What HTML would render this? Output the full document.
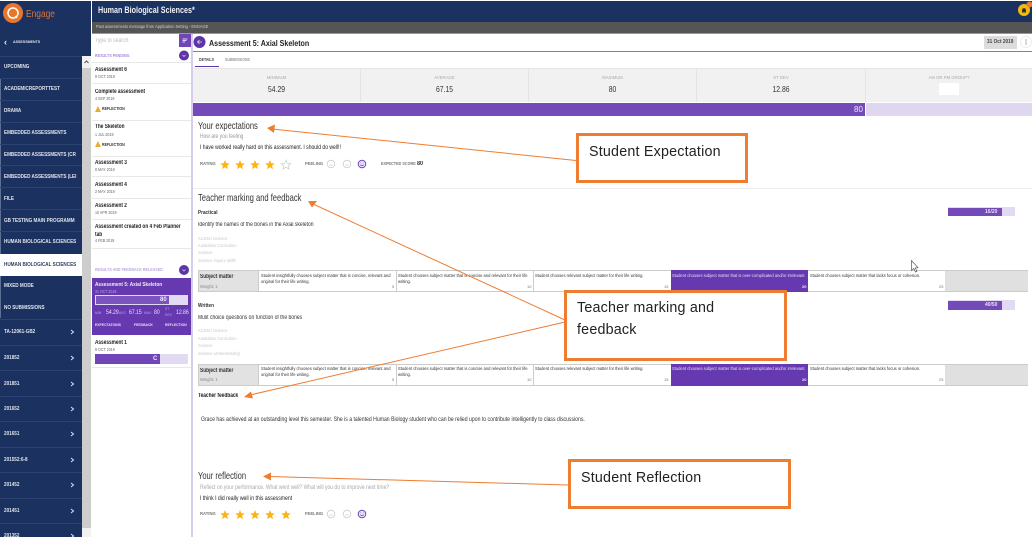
<!DOCTYPE html>
<html><head><meta charset="utf-8"><style>
html,body{margin:0;padding:0;background:#fff}
body{width:1032px;height:546px;position:relative;overflow:hidden;font-family:"Liberation Sans",sans-serif}
#app{position:absolute;left:0;top:0;width:1032px;height:537px;overflow:hidden;filter:blur(.3px);background:#fff}
#app div,#app span.a{position:absolute}
.t{white-space:nowrap;line-height:10px;height:10px}
.x9,.x85,.x8,.x78,.hd{transform-origin:0 50%}
.x9{transform:scaleX(.9)}.x85{transform:scaleX(.85)}.x8{transform:scaleX(.8)}.x78{transform:scaleX(.78)}
.hd{font-size:10.500px;color:#333;transform:scaleX(.72)}
.nav{left:4px;font-weight:bold;font-size:5.200px;color:#dfe3ec;width:82px;overflow:hidden;transform:scaleX(.89);transform-origin:0 50%}
.sl{left:0;width:82px;height:1px;background:#2b4273}
.h{left:95px;font-weight:bold;font-size:6px;color:#222;transform:scaleX(.79);transform-origin:0 50%}
.d{left:95px;font-size:4.200px;color:#666;transform:scaleX(.87);transform-origin:0 50%}
.ln{left:92px;width:99px;height:1px;background:#e8e8e8}
.w{left:102px;font-weight:bold;font-size:4.200px;color:#333;transform:scaleX(.85);transform-origin:0 50%}
.lab{font-size:4.300px;color:#aaa;text-align:center}
.val{font-size:8.500px;color:#333;text-align:center;transform:scaleX(.8)}
.g{left:198px;font-size:4.400px;color:#c8c8c8;transform:scaleX(.92);transform-origin:0 50%}
.sm{font-size:4.100px;color:#333;line-height:6px;white-space:normal}
.sc{font-size:4px;color:#777}
.rb{left:198px;width:830px;height:20px;background:#fff;border-top:1px solid #ccc;border-bottom:1px solid #ccc}
.st{font-size:6.200px;color:#e8e0f5;transform:scaleX(.82);transform-origin:0 50%}
.box{position:absolute;border:3px solid #ed7d31;background:#fff;box-sizing:border-box}
.bt{position:absolute;font-size:14.300px;color:#222;white-space:nowrap;line-height:22px;letter-spacing:.2px;font-family:"Liberation Sans",sans-serif}
</style></head><body>
<div id="app">
<!-- sidebar -->
<div style="left:0;top:1px;width:91px;height:55px;background:#1b3160"></div>
<div style="left:0;top:56px;width:82px;height:481px;background:#1b3160"></div>
<div style="left:82px;top:56px;width:9px;height:481px;background:#cdcdcd"></div>
<div style="left:82px;top:56px;width:9px;height:12px;background:#f1f1f1"></div>
<div style="left:82px;top:528px;width:9px;height:9px;background:#f1f1f1"></div>
<svg style="position:absolute;left:82px;top:56px" width="9" height="12"><path d="M2.500 7L4.500 5L6.500 7" stroke="#555" fill="none"/></svg>
<div style="left:0;top:78px;width:1px;height:240px;background:#5d6f94"></div>
<svg style="position:absolute;left:2px;top:1px" width="24" height="24"><circle cx="11" cy="12" r="10" fill="#e8772e"/><circle cx="11" cy="12" r="5" fill="none" stroke="#fff" stroke-width="1.500"/><path d="M13 15L15 17" stroke="#fff"/></svg>
<div class="t x8" style="left:26px;top:9px;font-size:10.500px;color:#d9743a">Engage</div>
<div class="t" style="left:4px;top:37px;font-size:9px;color:#eef;font-weight:bold">‹</div>
<div class="t x9" style="left:13px;top:37px;font-size:4px;font-weight:bold;color:#dfe3ec">ASSESSMENTS</div>
<div class="sl" style="top:56px"></div><div class="sl" style="top:78px"></div><div class="sl" style="top:100px"></div><div class="sl" style="top:122px"></div><div class="sl" style="top:144px"></div><div class="sl" style="top:165px"></div><div class="sl" style="top:187px"></div><div class="sl" style="top:209px"></div><div class="sl" style="top:231px"></div><div class="sl" style="top:319px"></div><div class="sl" style="top:345px"></div><div class="sl" style="top:370px"></div><div class="sl" style="top:396px"></div><div class="sl" style="top:421px"></div><div class="sl" style="top:447px"></div><div class="sl" style="top:472px"></div><div class="sl" style="top:498px"></div><div class="sl" style="top:523px"></div>
<div style="left:0;top:254px;width:82px;height:22px;background:#fff"></div>
<div class="t nav" style="top:62px">UPCOMING</div>
<div class="t nav" style="top:84px">ACADEMICREPORTTEST</div>
<div class="t nav" style="top:106px">DRAMA</div>
<div class="t nav" style="top:128px">EMBEDDED ASSESSMENTS</div>
<div class="t nav" style="top:150px">EMBEDDED ASSESSMENTS (CR</div>
<div class="t nav" style="top:172px">EMBEDDED ASSESSMENTS (LEI</div>
<div class="t nav" style="top:194px">FILE</div>
<div class="t nav" style="top:216px">GB TESTING MAIN PROGRAMM</div>
<div class="t nav" style="top:237px">HUMAN BIOLOGICAL SCIENCES</div>
<div class="t nav" style="top:260px;color:#33405f">HUMAN BIOLOGICAL SCIENCES</div>
<div class="t nav" style="top:281px">MIXED MODE</div>
<div class="t nav" style="top:303px">NO SUBMISSIONS</div>
<div class="t nav" style="top:327px">TA-12061-GB2</div>
<div class="t nav" style="top:353px">201852</div>
<div class="t nav" style="top:379px">201851</div>
<div class="t nav" style="top:404px">201652</div>
<div class="t nav" style="top:429px">201651</div>
<div class="t nav" style="top:455px">201552:6-8</div>
<div class="t nav" style="top:480px">201452</div>
<div class="t nav" style="top:506px">201451</div>
<div class="t nav" style="top:531px">201352</div>
<svg style="position:absolute;left:68px;top:320px" width="10" height="217" fill="none" stroke="#dfe3ec" stroke-width="1"><path d="M3 10L5.500 12L3 14M3 36L5.500 38L3 40M3 62L5.500 64L3 66M3 87L5.500 89L3 91M3 112L5.500 114L3 116M3 138L5.500 140L3 142M3 163L5.500 165L3 167M3 189L5.500 191L3 193M3 214L5.500 216L3 218"/></svg>
<!-- header -->
<div style="left:92px;top:1px;width:940px;height:21px;background:#1b3160"></div>
<div style="left:92px;top:22px;width:940px;height:11px;background:#555"></div>
<div style="left:92px;top:33px;width:940px;height:1px;background:#999"></div>
<div class="t" style="left:98px;top:5px;font-size:9px;font-weight:bold;color:#f0f2f6;transform:scaleX(.8);transform-origin:0 50%">Human Biological Sciences*</div>
<div class="t" style="left:96px;top:22px;font-size:4.300px;color:#ccc;transform:scaleX(.92);transform-origin:0 50%">Past assessments message from Application Setting - ENGAGE</div>
<svg style="position:absolute;left:1016px;top:1px" width="16" height="18"><circle cx="8" cy="9" r="6" fill="#f2b90f"/><path d="M6 11.500V8.500Q8 5.500 10 8.500V11.500Z" fill="#333"/><circle cx="13.500" cy="3.500" r="3" fill="#ed7d31"/></svg>
<!-- list panel -->
<div style="left:191px;top:34px;width:2px;height:503px;background:#d8ccee"></div>
<div class="t x85" style="left:95px;top:36px;font-size:6px;color:#bbb">Type to search</div>
<div style="left:179px;top:34px;width:12px;height:13px;background:#6f45b8"></div>
<svg style="position:absolute;left:179px;top:34px" width="12" height="13"><path d="M3.500 5H8.500M3.500 6.500H7.500M3.500 8H6" stroke="#fff" stroke-width=".7"/></svg>
<div class="t x85" style="left:95px;top:50.500px;font-size:4.300px;font-weight:bold;color:#a88ad8">RESULTS PENDING</div>
<svg style="position:absolute;left:179px;top:50px" width="10" height="11"><circle cx="5" cy="5.500" r="5" fill="#5e35a8"/><path d="M3.500 5L5 6.500L6.500 5" stroke="#ddd" fill="none" stroke-width=".7"/></svg>
<div class="ln" style="top:62px"></div><div class="ln" style="top:83px"></div><div class="ln" style="top:120px"></div><div class="ln" style="top:156px"></div><div class="ln" style="top:176px"></div><div class="ln" style="top:198px"></div><div class="ln" style="top:219px"></div><div class="ln" style="top:248px"></div><div class="ln" style="top:367px"></div>
<div class="t h" style="top:65px">Assessment 6</div><div class="t d" style="top:72px">9 OCT 2019</div>
<div class="t h" style="top:87px">Complete assessment</div><div class="t d" style="top:94px">4 SEP 2019</div>
<svg style="position:absolute;left:95px;top:106px" width="6" height="6"><path d="M3 0L6 6H0Z" fill="#e8ad2e"/></svg><div class="t w" style="top:104px">REFLECTION</div>
<div class="t h" style="top:122px">The Skeleton</div><div class="t d" style="top:129.500px">1 JUL 2019</div>
<svg style="position:absolute;left:95px;top:141px" width="6" height="6"><path d="M3 0L6 6H0Z" fill="#e8ad2e"/></svg><div class="t w" style="top:140px">REFLECTION</div>
<div class="t h" style="top:158px">Assessment 3</div><div class="t d" style="top:165px">8 MAY 2019</div>
<div class="t h" style="top:179.500px">Assessment 4</div><div class="t d" style="top:186.500px">2 MAY 2019</div>
<div class="t h" style="top:200.500px">Assessment 2</div><div class="t d" style="top:208px">10 APR 2019</div>
<div class="t h" style="top:222px">Assessment created on 4 Feb Planner</div><div class="t h" style="top:229.500px">tab</div><div class="t d" style="top:236px">4 FEB 2019</div>
<div class="t x85" style="left:95px;top:265px;font-size:4.300px;color:#b9a8d8;font-weight:bold">RESULTS AND FEEDBACK RELEASED</div>
<svg style="position:absolute;left:179px;top:264px" width="10" height="12"><circle cx="5" cy="6" r="5" fill="#5e35a8"/><path d="M3.500 5.500L5 7L6.500 5.500" stroke="#ddd" fill="none" stroke-width=".7"/></svg>
<!-- card -->
<div style="left:92px;top:278px;width:99px;height:57px;background:#6639b0"></div>
<div class="t" style="left:95px;top:280px;font-size:5.800px;font-weight:bold;color:#eee;transform:scaleX(.82);transform-origin:0 50%">Assessment 5: Axial Skeleton</div>
<div class="t x85" style="left:95px;top:287px;font-size:4.200px;color:#b9a3dd">31 OCT 2019</div>
<div style="left:95px;top:295px;width:93px;height:10px;background:#e2daf2"></div>
<div style="left:96px;top:296px;width:73px;height:8px;background:#7b55bd"></div>
<div class="t" style="left:160px;top:295px;font-size:6px;font-weight:bold;color:#eee">80</div>
<div class="t x85" style="left:95px;top:308px;font-size:4px;color:#b9a3dd">MIN</div>
<div class="t st" style="left:106px;top:308px">54.29</div>
<div class="t x85" style="left:119px;top:308px;font-size:4px;color:#b9a3dd">AVG</div>
<div class="t st" style="left:129px;top:308px">67.15</div>
<div class="t x85" style="left:144px;top:308px;font-size:4px;color:#b9a3dd">MAX</div>
<div class="t st" style="left:154px;top:308px">80</div>
<div class="t x85" style="left:165px;top:304px;font-size:4px;color:#b9a3dd">ST</div>
<div class="t x85" style="left:165px;top:310px;font-size:4px;color:#b9a3dd">DEV</div>
<div class="t st" style="left:176px;top:308px">12.86</div>
<div class="t x85" style="left:95px;top:320px;font-size:4px;font-weight:bold;color:#e8e0f5">EXPECTATIONS</div>
<div class="t x85" style="left:134px;top:320px;font-size:4px;font-weight:bold;color:#e8e0f5">FEEDBACK</div>
<div class="t x85" style="left:165px;top:320px;font-size:4px;font-weight:bold;color:#e8e0f5">REFLECTION</div>
<div class="t h" style="top:338px">Assessment 1</div><div class="t d" style="top:345px">9 OCT 2019</div>
<div style="left:95px;top:354px;width:93px;height:10px;background:#e2daf2"></div>
<div style="left:95px;top:354px;width:65px;height:10px;background:#6f45b8"></div>
<div class="t" style="left:153px;top:354px;font-size:6px;font-weight:bold;color:#eee">C</div>
<!-- main -->
<svg style="position:absolute;left:193px;top:35px" width="14" height="14"><circle cx="6.500" cy="7" r="6" fill="#5e35a8"/><path d="M9 7H4.500M6.500 5L4.500 7L6.500 9" stroke="#ddd" fill="none" stroke-width=".8"/></svg>
<div class="t" style="left:209px;top:37.500px;font-size:8.600px;font-weight:bold;color:#222;transform:scaleX(.825);transform-origin:0 50%">Assessment 5: Axial Skeleton</div>
<div style="left:984px;top:36px;width:33px;height:13px;background:#dcdcdc"></div>
<div class="t x85" style="left:987px;top:37px;font-size:5.600px;font-weight:bold;color:#444">31 Oct 2019</div>
<svg style="position:absolute;left:1020px;top:36px" width="12" height="12"><circle cx="6" cy="6" r="5.500" fill="#fff" stroke="#eee"/><path d="M6 3.500V8.500" stroke="#666" stroke-dasharray="1 1"/></svg>
<div style="left:193px;top:51px;width:839px;height:1px;background:#8d70c8"></div>
<div class="t x85" style="left:199px;top:55px;font-size:4.200px;font-weight:bold;color:#444">DETAILS</div>
<div class="t x85" style="left:225px;top:55px;font-size:4.200px;color:#999;font-weight:bold">SUBMISSIONS</div>
<div style="left:195px;top:66px;width:24px;height:1px;background:#5e35a8"></div>
<div style="left:193px;top:68px;width:839px;height:34px;background:#f1f1f1;border-top:1px solid #e6e6e6;box-sizing:border-box"></div>
<div style="left:360px;top:68px;width:1px;height:34px;background:#e4e4e4"></div>
<div style="left:528px;top:68px;width:1px;height:34px;background:#e4e4e4"></div>
<div style="left:696px;top:68px;width:1px;height:34px;background:#e4e4e4"></div>
<div style="left:865px;top:68px;width:1px;height:34px;background:#e4e4e4"></div>
<div class="t lab" style="left:193px;width:167px;top:73px">MINIMUM</div>
<div class="t lab" style="left:361px;width:167px;top:73px">AVERAGE</div>
<div class="t lab" style="left:529px;width:167px;top:73px">MAXIMUM</div>
<div class="t lab" style="left:697px;width:168px;top:73px">ST DEV</div>
<div class="t lab" style="left:866px;width:166px;top:73px">AM OR PM GROUP?</div>
<div class="t val" style="left:193px;width:167px;top:84px">54.29</div>
<div class="t val" style="left:361px;width:167px;top:84px">67.15</div>
<div class="t val" style="left:529px;width:167px;top:84px">80</div>
<div class="t val" style="left:697px;width:168px;top:84px">12.86</div>
<div style="left:939px;top:83px;width:20px;height:12px;background:#fff"></div>
<div style="left:193px;top:103px;width:672px;height:13px;background:#7449b8"></div>
<div style="left:866px;top:103px;width:166px;height:13px;background:#dfd6f0"></div>
<div class="t" style="left:854px;top:104.500px;font-size:8px;color:#f0eaf8">80</div>

<div class="t hd" style="left:198px;top:121px">Your expectations</div>
<div class="t x78" style="left:200px;top:132px;font-size:6.300px;color:#999">How are you feeling</div>
<div class="t" style="left:200px;top:143px;font-size:6.100px;color:#222;transform:scaleX(.825);transform-origin:0 50%">I have worked really hard on this assessment. I should do well!!</div>
<div class="t" style="left:200px;top:159px;font-size:4.200px;font-weight:bold;color:#777">RATING</div>
<div class="t" style="left:305px;top:159px;font-size:4.200px;font-weight:bold;color:#777">FEELING</div>
<div class="t x9" style="left:381px;top:159px;font-size:4.200px;font-weight:bold;color:#777">EXPECTED SCORE</div>
<div class="t" style="left:417px;top:159px;font-size:6px;font-weight:bold;color:#333;transform:scaleX(.9);transform-origin:0 50%">80</div>
<svg style="position:absolute;left:220px;top:159px" width="150" height="13">
<g fill="#fab414"><path d="M5 1L6.300 4.300L9.800 4.500L7.100 6.700L8 10.100L5 8.200L2 10.100L2.900 6.700L.2 4.500L3.700 4.300Z"/><path transform="translate(15)" d="M5 1L6.300 4.300L9.800 4.500L7.100 6.700L8 10.100L5 8.200L2 10.100L2.900 6.700L.2 4.500L3.700 4.300Z"/><path transform="translate(30)" d="M5 1L6.300 4.300L9.800 4.500L7.100 6.700L8 10.100L5 8.200L2 10.100L2.900 6.700L.2 4.500L3.700 4.300Z"/><path transform="translate(45)" d="M5 1L6.300 4.300L9.800 4.500L7.100 6.700L8 10.100L5 8.200L2 10.100L2.900 6.700L.2 4.500L3.700 4.300Z"/></g>
<path transform="translate(61)" fill="none" stroke="#ccc" stroke-width=".7" d="M5 1L6.300 4.300L9.800 4.500L7.100 6.700L8 10.100L5 8.200L2 10.100L2.900 6.700L.2 4.500L3.700 4.300Z"/>
<g fill="none" stroke="#ccc" stroke-width=".8"><circle cx="111" cy="5" r="3.800"/><path d="M109.500 6.500Q111 5.300 112.500 6.500"/><circle cx="127" cy="5" r="3.800"/><path d="M125.500 6H128.500"/></g>
<circle cx="142" cy="5" r="3.800" fill="#e6def5" stroke="#6f45b8" stroke-width="1"/><path d="M140.300 5.700Q142 7.500 143.700 5.700M140.500 3.800H141M143 3.800H143.500" stroke="#6f45b8" stroke-width=".7" fill="none"/>
</svg>
<div style="left:193px;top:188px;width:839px;height:1px;background:#efefef"></div>

<div class="t hd" style="left:198px;top:193px">Teacher marking and feedback</div>
<div class="t x85" style="left:198px;top:208px;font-size:5.500px;font-weight:bold;color:#333">Practical</div>
<div class="t" style="left:198px;top:219.500px;font-size:6px;color:#333;transform:scaleX(.835);transform-origin:0 50%">Identify the names of the bones in the Axial skeleton</div>
<div class="t g" style="top:233.500px">ACSSU Science</div>
<div class="t g" style="top:241px">Australian Curriculum</div>
<div class="t g" style="top:248px">Science</div>
<div class="t g" style="top:256px;font-style:italic">Science Inquiry Skills</div>
<div style="left:948px;top:207px;width:67px;height:9px;background:#e2daf2"></div>
<div style="left:948px;top:208px;width:54px;height:8px;background:#7449b8"></div>
<div class="t x9" style="left:985px;top:207px;font-size:5.500px;font-weight:bold;color:#e8e0f5">16/20</div>

<div class="rb" style="top:270px"></div>
<div style="left:198px;top:270px;width:61px;height:22px;background:#e2e2e2;border:1px solid #ccc;box-sizing:border-box"></div>
<div class="t x8" style="left:200px;top:272px;font-size:6px;font-weight:bold;color:#333">Subject matter</div>
<div class="t" style="left:200px;top:282px;font-size:4.200px;color:#888">Weight: 1</div>
<div class="sm" style="left:261px;top:273px;width:134px">Student insightfully chooses subject matter that is concise, relevant and original for their life writing.</div><div class="t sc" style="left:392px;top:282px">5</div>
<div style="left:396px;top:271px;width:1px;height:21px;background:#ccc"></div>
<div class="sm" style="left:398px;top:273px;width:134px">Student chooses subject matter that is concise and relevant for their life writing.</div><div class="t sc" style="left:527px;top:282px">10</div>
<div style="left:533px;top:271px;width:1px;height:21px;background:#ccc"></div>
<div class="sm" style="left:535px;top:273px;width:134px">Student chooses relevant subject matter for their life writing.</div><div class="t sc" style="left:664px;top:282px">15</div>
<div style="left:671px;top:270px;width:137px;height:22px;background:#6639b0"></div>
<div class="sm" style="left:672px;top:273px;width:136px;color:#e6def5;white-space:nowrap">Student chooses subject matter that is over-complicated and/or irrelevant.</div><div class="t sc" style="left:802px;top:282px;color:#eee;font-weight:bold">20</div>
<div class="sm" style="left:810px;top:273px;width:134px">Student chooses subject matter that lacks focus or cohesion.</div><div class="t sc" style="left:939px;top:282px">25</div>
<div style="left:945px;top:271px;width:83px;height:20px;background:#e0e0e0"></div>

<div class="t x85" style="left:198px;top:301px;font-size:5.500px;font-weight:bold;color:#333">Written</div>
<div class="t" style="left:198px;top:313px;font-size:6px;color:#333;transform:scaleX(.835);transform-origin:0 50%">Mulit choice questions on function of the bones</div>
<div class="t g" style="top:326px">ACSSU Science</div>
<div class="t g" style="top:334px">Australian Curriculum</div>
<div class="t g" style="top:341px">Science</div>
<div class="t g" style="top:349px;font-style:italic">Science Understanding</div>
<div style="left:948px;top:300px;width:67px;height:10px;background:#e2daf2"></div>
<div style="left:948px;top:301px;width:54px;height:9px;background:#7449b8"></div>
<div class="t x9" style="left:985px;top:300px;font-size:5.500px;font-weight:bold;color:#e8e0f5">40/50</div>

<div class="rb" style="top:364px"></div>
<div style="left:198px;top:364px;width:61px;height:22px;background:#e2e2e2;border:1px solid #ccc;box-sizing:border-box"></div>
<div class="t x8" style="left:200px;top:366px;font-size:6px;font-weight:bold;color:#333">Subject matter</div>
<div class="t" style="left:200px;top:375px;font-size:4.200px;color:#888">Weight: 1</div>
<div class="sm" style="left:261px;top:366px;width:134px">Student insightfully chooses subject matter that is concise, relevant and original for their life writing.</div><div class="t sc" style="left:392px;top:375px">5</div>
<div style="left:396px;top:365px;width:1px;height:21px;background:#ccc"></div>
<div class="sm" style="left:398px;top:366px;width:134px">Student chooses subject matter that is concise and relevant for their life writing.</div><div class="t sc" style="left:527px;top:375px">10</div>
<div style="left:533px;top:365px;width:1px;height:21px;background:#ccc"></div>
<div class="sm" style="left:535px;top:366px;width:134px">Student chooses relevant subject matter for their life writing.</div><div class="t sc" style="left:664px;top:375px">15</div>
<div style="left:671px;top:364px;width:137px;height:22px;background:#6639b0"></div>
<div class="sm" style="left:672px;top:366px;width:136px;color:#e6def5;white-space:nowrap">Student chooses subject matter that is over-complicated and/or irrelevant.</div><div class="t sc" style="left:802px;top:375px;color:#eee;font-weight:bold">20</div>
<div class="sm" style="left:810px;top:366px;width:134px">Student chooses subject matter that lacks focus or cohesion.</div><div class="t sc" style="left:939px;top:375px">25</div>
<div style="left:945px;top:365px;width:83px;height:20px;background:#e0e0e0"></div>

<div class="t x8" style="left:198px;top:391px;font-size:6px;font-weight:bold;color:#222">Teacher feedback</div>
<div class="t" style="left:201px;top:414.500px;font-size:6.100px;color:#333;transform:scaleX(.84);transform-origin:0 50%">Grace has achieved at an outstanding level this semester. She is a talented Human Biology student who can be relied upon to contribute intelligently to class discussions.</div>

<div class="t hd" style="left:198px;top:471px">Your reflection</div>
<div class="t" style="left:200px;top:482.500px;font-size:6.100px;color:#aaa;transform:scaleX(.82);transform-origin:0 50%">Reflect on your performance. What went well? What will you do to improve next time?</div>
<div class="t" style="left:200px;top:493.500px;font-size:6.100px;color:#222;transform:scaleX(.84);transform-origin:0 50%">I think I did really well in this assessment</div>
<div class="t" style="left:200px;top:509px;font-size:4.200px;font-weight:bold;color:#777">RATING</div>
<div class="t" style="left:305px;top:509px;font-size:4.200px;font-weight:bold;color:#777">FEELING</div>
<svg style="position:absolute;left:220px;top:509px" width="150" height="13">
<g fill="#fab414"><path d="M5 1L6.300 4.300L9.800 4.500L7.100 6.700L8 10.100L5 8.200L2 10.100L2.900 6.700L.2 4.500L3.700 4.300Z"/><path transform="translate(15)" d="M5 1L6.300 4.300L9.800 4.500L7.100 6.700L8 10.100L5 8.200L2 10.100L2.900 6.700L.2 4.500L3.700 4.300Z"/><path transform="translate(30)" d="M5 1L6.300 4.300L9.800 4.500L7.100 6.700L8 10.100L5 8.200L2 10.100L2.900 6.700L.2 4.500L3.700 4.300Z"/><path transform="translate(45)" d="M5 1L6.300 4.300L9.800 4.500L7.100 6.700L8 10.100L5 8.200L2 10.100L2.900 6.700L.2 4.500L3.700 4.300Z"/><path transform="translate(61)" d="M5 1L6.300 4.300L9.800 4.500L7.100 6.700L8 10.100L5 8.200L2 10.100L2.900 6.700L.2 4.500L3.700 4.300Z"/></g>
<g fill="none" stroke="#ccc" stroke-width=".8"><circle cx="111" cy="5" r="3.800"/><path d="M109.500 6.500Q111 5.300 112.500 6.500"/><circle cx="127" cy="5" r="3.800"/><path d="M125.500 6H128.500"/></g>
<circle cx="142" cy="5" r="3.800" fill="#e6def5" stroke="#6f45b8" stroke-width="1"/><path d="M140.300 5.700Q142 7.500 143.700 5.700M140.500 3.800H141M143 3.800H143.500" stroke="#6f45b8" stroke-width=".7" fill="none"/>
</svg>
<svg style="position:absolute;left:908px;top:259px" width="12" height="16"><path d="M3.500 1.500V11.500L5.800 9.500L7.500 13L9 12.300L7.300 8.900L10 8.700Z" fill="#fff" stroke="#555" stroke-width=".7"/></svg>
</div>
<!-- annotations -->
<svg style="position:absolute;left:0;top:0" width="1032" height="546">
<g stroke="#ed7d31" stroke-width="1" fill="none"><path d="M576 160.500L272 129"/><path d="M565 320L313 204"/><path d="M565 322L250 395"/><path d="M568 485L269 476.500"/></g>
<g fill="#ed7d31"><path d="M267 128L275 124.500L274 133Z"/><path d="M308 201L317 201L312 207.500Z"/><path d="M244 397L251 391.500L253 398.500Z"/><path d="M263 476.500L271 472.500L271 480.500Z"/></g>
</svg>
<div class="box" style="left:576px;top:133px;width:172px;height:50px"></div>
<div class="bt" style="left:589px;top:141px">Student Expectation</div>
<div class="box" style="left:564px;top:290px;width:223px;height:71px"></div>
<div class="bt" style="left:577px;top:297px">Teacher marking and</div>
<div class="bt" style="left:577px;top:319px">feedback</div>
<div class="box" style="left:568px;top:459px;width:223px;height:50px"></div>
<div class="bt" style="left:581px;top:467px">Student Reflection</div>
</body></html>
